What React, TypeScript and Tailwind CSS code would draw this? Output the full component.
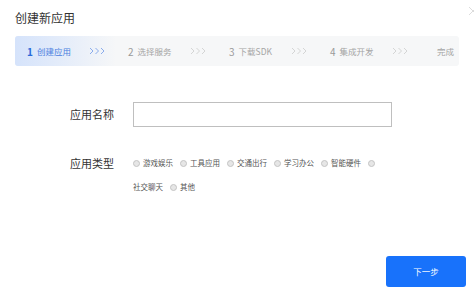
const steps = [
  { n: "1", label: "创建应用" },
  { n: "2", label: "选择服务" },
  { n: "3", label: "下载SDK" },
  { n: "4", label: "集成开发" },
];

const types = ["游戏娱乐", "工具应用", "交通出行", "学习办公", "智能硬件", "社交聊天", "其他"];

const Radio = () => (
  <span className="block w-[7px] h-[7px] rounded-full border border-[#c4c4c4] bg-[#e6e6e6] mr-[3px]" />
);

const Chevrons = ({ color }: { color: string }) => (
  <svg className="ml-auto w-[16px] h-[8px]" viewBox="0 0 16 8" fill="none">
    <path d="M1 1 L4 4 L1 7 M6.5 1 L9.5 4 L6.5 7 M12 1 L15 4 L12 7" stroke={color} strokeWidth="0.9" />
  </svg>
);

const App = () => {
  return (
    <div
      className="relative w-[474px] h-[295px] bg-white overflow-hidden"
      style={{ fontFamily: '"Noto Sans CJK SC", "Noto Sans", sans-serif' }}
    >
      {/* close icon, cut off at the edge */}
      <svg className="absolute top-[6px] right-[-4px] w-[10px] h-[10px]" viewBox="0 0 10 10">
        <path d="M1 1 L9 9 M9 1 L1 9" stroke="#dcdcdc" strokeWidth="1" />
      </svg>

      {/* Title */}
      <div className="pt-[9px] pl-[15px] text-[12px] leading-[18px] text-[#333]">创建新应用</div>

      {/* Steps */}
      <div className="mt-[9px] mx-[15px] h-[30px] flex rounded-[3px] bg-[#f6f7f8] overflow-hidden">
        {steps.map((s, i) => (
          <div
            key={s.n}
            className={
              i === 0
                ? "w-[101px] flex items-center pl-[12px] pr-[11px] bg-gradient-to-r from-[#d5e3fb] to-[#f6f7f8]"
                : "w-[101px] flex items-center pl-[12px] pr-[11px]"
            }
          >
            <span
              className={
                i === 0
                  ? "text-[10px] font-bold text-[#2a6ad9] mr-[4px]"
                  : "text-[10px] text-[#9a9a9a] mr-[4px]"
              }
            >
              {s.n}
            </span>
            <span className={i === 0 ? "text-[8.5px] text-[#4a80e0]" : "text-[8.5px] text-[#a5a5a5]"}>
              {s.label}
            </span>
            <Chevrons color={i === 0 ? "#7ea4ea" : "#d0d0d0"} />
          </div>
        ))}
        <div className="flex-1 flex items-center pl-[18px] text-[8.5px] text-[#a5a5a5]">完成</div>
      </div>

      {/* App name */}
      <div className="mt-[36px] pl-[70px] flex items-center">
        <span className="w-[63px] text-[11px] text-[#333]">应用名称</span>
        <div className="w-[259px] h-[25px] border border-[#bfbfbf] bg-white" />
      </div>

      {/* App type */}
      <div className="mt-[24px] pl-[70px] flex items-start">
        <span className="w-[63px] text-[11px] leading-[24px] text-[#333]">应用类型</span>
        <div className="w-[260px] flex flex-wrap items-center">
          {types.map((t) => (
            <div key={t} className="contents">
              <div className="h-6 flex items-center">
                <Radio />
              </div>
              <div className="h-6 flex items-center text-[7.5px] text-[#555] mr-[7px]">
                <span className="w-[30px]">{t}</span>
              </div>
            </div>
          ))}
        </div>
      </div>

      {/* Next button */}
      <div className="mt-[57px] pr-[8px] flex justify-end">
        <button className="w-[80px] h-[31px] rounded-[3px] bg-[#1872fb] text-white text-[8.5px]">下一步</button>
      </div>
    </div>
  );
};

export default App;
